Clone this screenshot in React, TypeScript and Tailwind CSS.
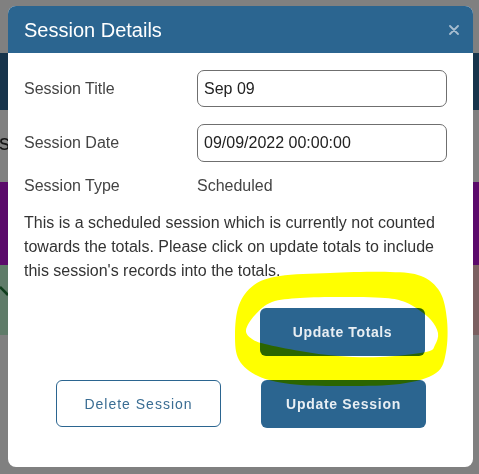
import React from "react";

type P = [number, number];

function closedCurve(pts: P[]): string {
  const n = pts.length;
  let d = `M${pts[0][0]} ${pts[0][1]}`;
  for (let i = 0; i < n; i++) {
    const p0 = pts[(i - 1 + n) % n];
    const p1 = pts[i];
    const p2 = pts[(i + 1) % n];
    const p3 = pts[(i + 2) % n];
    const c1x = p1[0] + (p2[0] - p0[0]) / 6;
    const c1y = p1[1] + (p2[1] - p0[1]) / 6;
    const c2x = p2[0] - (p3[0] - p1[0]) / 6;
    const c2y = p2[1] - (p3[1] - p1[1]) / 6;
    d += ` C${c1x.toFixed(1)} ${c1y.toFixed(1)} ${c2x.toFixed(1)} ${c2y.toFixed(1)} ${p2[0]} ${p2[1]}`;
  }
  return d + " Z";
}

const outer: P[] = [
  [235, 335],
  [239, 305],
  [254, 285],
  [280, 276],
  [330, 273],
  [390, 272],
  [421, 276],
  [440, 292],
  [447, 320],
  [446, 352],
  [436, 373],
  [400, 384],
  [340, 386],
  [290, 384],
  [258, 376],
  [239, 360],
];

const inner: P[] = [
  [246, 330],
  [255, 315],
  [272, 302],
  [300, 298],
  [340, 297],
  [385, 298],
  [405, 302],
  [419, 310],
  [431, 320],
  [438, 333],
  [435, 345],
  [426, 352],
  [380, 357],
  [338, 356],
  [300, 351],
  [265, 344],
  [252, 339],
];

export default function App() {
  const ring = closedCurve(outer) + " " + closedCurve(inner);
  return (
    <div className="relative w-[479px] h-[474px] overflow-hidden bg-[#808080] font-['Liberation_Sans',Arial,sans-serif]">
      {/* dimmed page behind the dialog */}
      <div className="h-[53px]" />
      <div className="h-[57px] bg-[#17344b]" />
      <div className="h-[72px] pt-[20px]">
        <span className="block -ml-[1px] text-[22px] leading-[26px] text-[#141414]">s</span>
      </div>
      <div className="h-[83px] bg-[#5b0a6b]" />
      <div className="h-[70px] flex">
        <div className="flex-1 bg-[#5f7b69]">
          <svg width="10" height="40" className="block mt-[18px]">
            <line x1="0" y1="4" x2="8" y2="12" stroke="#0f3d1c" strokeWidth="2.5" />
          </svg>
        </div>
        <div className="flex-1 bg-[#7b6061]" />
      </div>

      {/* dialog */}
      <div className="absolute left-[8px] top-[6px] w-[465px] h-[461px] rounded-[8px] bg-white overflow-hidden flex flex-col">
        <div className="h-[47px] shrink-0 bg-[#2b6590] flex items-center justify-between pl-[16px] pr-[14px]">
          <span className="text-[20px] leading-[24px] text-white">Session Details</span>
          <svg width="10" height="10" viewBox="0 0 10 10" className="mt-[1px]">
            <path d="M1 1 L9 9 M9 1 L1 9" stroke="#a7bdd0" strokeWidth="1.8" strokeLinecap="round" />
          </svg>
        </div>
        <div className="px-[16px] pt-[17px] text-[16px] leading-[24px] text-[#333]">
          <div className="flex items-center">
            <span className="w-[173px] text-[#444]">Session Title</span>
            <div className="w-[250px] h-[37px] border border-[#6f6f6f] rounded-[7px] flex items-center pl-[6px] text-[#222]">
              Sep 09
            </div>
          </div>
          <div className="flex items-center mt-[17px]">
            <span className="w-[173px] text-[#444]">Session Date</span>
            <div className="w-[250px] h-[38px] border border-[#6f6f6f] rounded-[7px] flex items-center pl-[6px] text-[#222]">
              09/09/2022 00:00:00
            </div>
          </div>
          <div className="flex items-center mt-[12px]">
            <span className="w-[173px] text-[#444]">Session Type</span>
            <span className="text-[#444]">Scheduled</span>
          </div>
          <p className="mt-[13px] text-[#333]">
            This is a scheduled session which is currently not counted towards the totals. Please click on update totals to include this session's records into the totals.
          </p>
          <div className="mt-[25px] pl-[236px]">
            <button className="w-[165px] h-[48px] rounded-[6px] bg-[#2b6590] text-[14px] font-bold tracking-[0.6px] text-[#e8eef3]">
              Update Totals
            </button>
          </div>
          <div className="mt-[24px] flex pl-[32px] gap-[40px]">
            <button className="w-[165px] h-[47px] rounded-[6px] border border-[#2b6590] bg-white text-[14px] tracking-[1px] text-[#3a6d93]">
              Delete Session
            </button>
            <button className="w-[165px] h-[48px] rounded-[6px] bg-[#2b6590] text-[14px] font-bold tracking-[0.7px] text-[#e8eef3]">
              Update Session
            </button>
          </div>
        </div>
      </div>

      {/* yellow marker annotation */}
      <svg
        className="absolute left-0 top-0 pointer-events-none mix-blend-multiply"
        width="479"
        height="474"
        viewBox="0 0 479 474"
      >
        <path d={ring} fill="#ffff00" fillRule="evenodd" />
      </svg>
    </div>
  );
}
